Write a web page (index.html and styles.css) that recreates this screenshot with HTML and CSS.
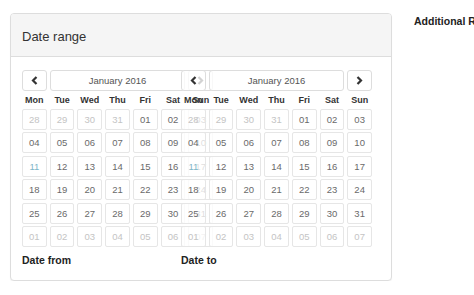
FILE: index.html
```html
<!DOCTYPE html>
<html>
<head>
<meta charset="utf-8">
<link rel="stylesheet" href="styles.css">
</head>
<body>
<div class="page">
  <div class="panel">
    <div class="panel-heading">Date range</div>
    <div class="panel-body">
      <div class="cal-row">
        <div class="cal">
          <div class="nav">
            <div class="nav-btn"><svg width="7" height="9" viewBox="0 0 7 9"><polyline points="5.5,1 2,4.5 5.5,8" fill="none" stroke="#333" stroke-width="2.2"/></svg></div>
            <div class="month">January 2016</div>
            <div class="nav-btn"><svg width="7" height="9" viewBox="0 0 7 9"><polyline points="1.5,1 5,4.5 1.5,8" fill="none" stroke="#333" stroke-width="2.2"/></svg></div>
          </div>
          <div class="days">
            <div class="dn">Mon</div><div class="dn">Tue</div><div class="dn">Wed</div><div class="dn">Thu</div><div class="dn">Fri</div><div class="dn">Sat</div><div class="dn">Sun</div>
          </div>
          <div class="grid">
            <div class="d o">28</div><div class="d o">29</div><div class="d o">30</div><div class="d o">31</div><div class="d">01</div><div class="d">02</div><div class="d">03</div>
            <div class="d">04</div><div class="d">05</div><div class="d">06</div><div class="d">07</div><div class="d">08</div><div class="d">09</div><div class="d">10</div>
            <div class="d t">11</div><div class="d">12</div><div class="d">13</div><div class="d">14</div><div class="d">15</div><div class="d">16</div><div class="d">17</div>
            <div class="d">18</div><div class="d">19</div><div class="d">20</div><div class="d">21</div><div class="d">22</div><div class="d">23</div><div class="d">24</div>
            <div class="d">25</div><div class="d">26</div><div class="d">27</div><div class="d">28</div><div class="d">29</div><div class="d">30</div><div class="d">31</div>
            <div class="d o">01</div><div class="d o">02</div><div class="d o">03</div><div class="d o">04</div><div class="d o">05</div><div class="d o">06</div><div class="d o">07</div>
          </div>
          <div class="label">Date from</div>
        </div>
        <div class="cal">
          <div class="nav">
            <div class="nav-btn"><svg width="7" height="9" viewBox="0 0 7 9"><polyline points="5.5,1 2,4.5 5.5,8" fill="none" stroke="#333" stroke-width="2.2"/></svg></div>
            <div class="month">January 2016</div>
            <div class="nav-btn"><svg width="7" height="9" viewBox="0 0 7 9"><polyline points="1.5,1 5,4.5 1.5,8" fill="none" stroke="#333" stroke-width="2.2"/></svg></div>
          </div>
          <div class="days">
            <div class="dn">Mon</div><div class="dn">Tue</div><div class="dn">Wed</div><div class="dn">Thu</div><div class="dn">Fri</div><div class="dn">Sat</div><div class="dn">Sun</div>
          </div>
          <div class="grid">
            <div class="d o">28</div><div class="d o">29</div><div class="d o">30</div><div class="d o">31</div><div class="d">01</div><div class="d">02</div><div class="d">03</div>
            <div class="d">04</div><div class="d">05</div><div class="d">06</div><div class="d">07</div><div class="d">08</div><div class="d">09</div><div class="d">10</div>
            <div class="d t">11</div><div class="d">12</div><div class="d">13</div><div class="d">14</div><div class="d">15</div><div class="d">16</div><div class="d">17</div>
            <div class="d">18</div><div class="d">19</div><div class="d">20</div><div class="d">21</div><div class="d">22</div><div class="d">23</div><div class="d">24</div>
            <div class="d">25</div><div class="d">26</div><div class="d">27</div><div class="d">28</div><div class="d">29</div><div class="d">30</div><div class="d">31</div>
            <div class="d o">01</div><div class="d o">02</div><div class="d o">03</div><div class="d o">04</div><div class="d o">05</div><div class="d o">06</div><div class="d o">07</div>
          </div>
          <div class="label">Date to</div>
        </div>
      </div>
    </div>
  </div>
  <div class="side">
    <div class="label">Additional Remarks</div>
  </div>
</div>
</body>
</html>
```

FILE: styles.css
```css
html, body {
  margin: 0;
  padding: 0;
  background: #fff;
  overflow: hidden;
}
body {
  font-family: "Liberation Sans", Arial, sans-serif;
  color: #333;
}
.page {
  display: flex;
  align-items: flex-start;
  gap: 22px;
  padding: 13px 0 0 10px;
}
.panel {
  flex: none;
  width: 382px;
  box-sizing: border-box;
  border: 1px solid #ddd;
  border-radius: 4px;
  box-shadow: 0 1px 1px rgba(0,0,0,0.05);
  background: #fff;
}
.panel-heading {
  background: #f5f5f5;
  border-bottom: 1px solid #ddd;
  border-radius: 3px 3px 0 0;
  padding: 15px 11px 12px;
  font-size: 13px;
  line-height: 15px;
  color: #333;
}
.panel-body {
  padding: 13px 11px 13px;
}
.cal-row {
  display: flex;
}
.cal {
  flex: none;
  width: 191px;
}
.cal + .cal {
  margin-left: -32px;
}
.nav {
  display: flex;
  gap: 3px;
  height: 21px;
}
.nav-btn {
  flex: none;
  width: 25px;
  box-sizing: border-box;
  border: 1px solid #ddd;
  border-radius: 3px;
  background: rgba(255,255,255,0.78);
  display: flex;
  align-items: center;
  justify-content: center;
}
.month {
  flex: 1;
  box-sizing: border-box;
  border: 1px solid #ddd;
  border-radius: 3px;
  background: rgba(255,255,255,0.78);
  font-size: 9.5px;
  line-height: 19px;
  text-align: center;
  color: #555;
}
.days {
  display: grid;
  grid-template-columns: repeat(7, 1fr);
  column-gap: 3px;
  height: 18px;
  line-height: 18px;
  font-size: 9px;
  font-weight: bold;
  color: #333;
  text-align: center;
}
.grid {
  display: grid;
  grid-template-columns: repeat(7, 1fr);
  grid-auto-rows: 21px;
  column-gap: 3px;
  row-gap: 2.4px;
}
.d {
  box-sizing: border-box;
  border: 1px solid #e6e6e6;
  border-radius: 2px;
  background: rgba(255,255,255,0.78);
  font-size: 9.5px;
  line-height: 19px;
  text-align: center;
  color: #6a6a6a;
}
.d.o {
  color: #c4c4c4;
}
.d.t {
  color: #7fb6c9;
}
.label {
  font-size: 10.5px;
  font-weight: bold;
  line-height: 14px;
  color: #222;
  white-space: nowrap;
}
.cal .label {
  margin-top: 6.5px;
}
.side {
  flex: none;
  padding-top: 1px;
}
```
